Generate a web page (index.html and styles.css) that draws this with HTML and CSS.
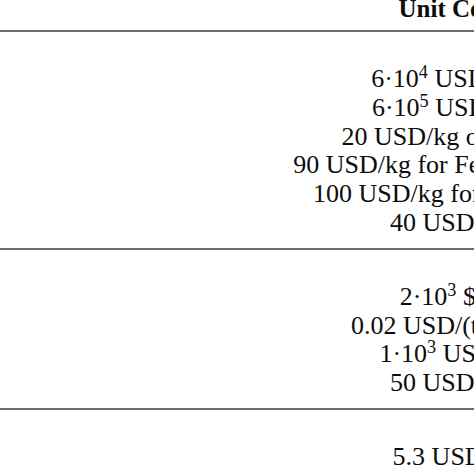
FILE: index.html
```html
<!DOCTYPE html>
<html lang="en">
<head>
<meta charset="utf-8">
<title>Unit costs</title>
<link rel="stylesheet" href="styles.css">
</head>
<body>
<div class="frame">
  <div class="sheet">
    <div class="row head">
      <div class="label"></div>
      <div class="cost">Unit Cost (USD)</div>
    </div>
    <div class="row group">
      <div class="label"></div>
      <div class="cost">
        <div class="line">6·10<sup>4</sup> USD/MW stack</div>
        <div class="line">6·10<sup>5</sup> USD/MW plant</div>
        <div class="line">20 USD/kg of ionomer film</div>
        <div class="line">90 USD/kg for Fe–N–C nanocatalyst</div>
        <div class="line">100 USD/kg for Pt/C catalyst ink</div>
        <div class="line">40 USD/MWh PV</div>
      </div>
    </div>
    <div class="row group">
      <div class="label"></div>
      <div class="cost">
        <div class="line">2·10<sup>3</sup> $/m<sup>2</sup> stack</div>
        <div class="line">0.02 USD/(t·km) by truck</div>
        <div class="line">1·10<sup>3</sup> USD/m<sup>3</sup> tanks</div>
        <div class="line">50 USD/MWh PV</div>
      </div>
    </div>
    <div class="row group">
      <div class="label"></div>
      <div class="cost">
        <div class="line">5.3 USD/kg of H<sub>2</sub></div>
      </div>
    </div>
  </div>
</div>
</body>
</html>
```

FILE: styles.css
```css
html, body {
  margin: 0;
  padding: 0;
  background: #ffffff;
  overflow: hidden;
}

.frame {
  width: 474px;
  height: 474px;
  overflow: hidden;
}

.sheet {
  width: 772px;
  font-family: "Liberation Serif", "Times New Roman", serif;
  font-size: 26px;
  color: #0d0d0d;
}

.row {
  display: grid;
  grid-template-columns: 200px 572px;
}

.cost {
  text-align: center;
  white-space: nowrap;
}

.head {
  font-size: 25px;
  font-weight: bold;
  line-height: 18px;
  padding-bottom: 12px;
}

.group {
  border-top: 2px solid #6a6a6a;
  padding: 33px 0 10px;
}

.line {
  line-height: 28.8px;
}

sup {
  font-size: 0.7em;
  vertical-align: baseline;
  position: relative;
  top: -0.5em;
  line-height: 0;
}

sub {
  font-size: 0.7em;
  vertical-align: baseline;
  position: relative;
  top: 0.25em;
  line-height: 0;
}
```
